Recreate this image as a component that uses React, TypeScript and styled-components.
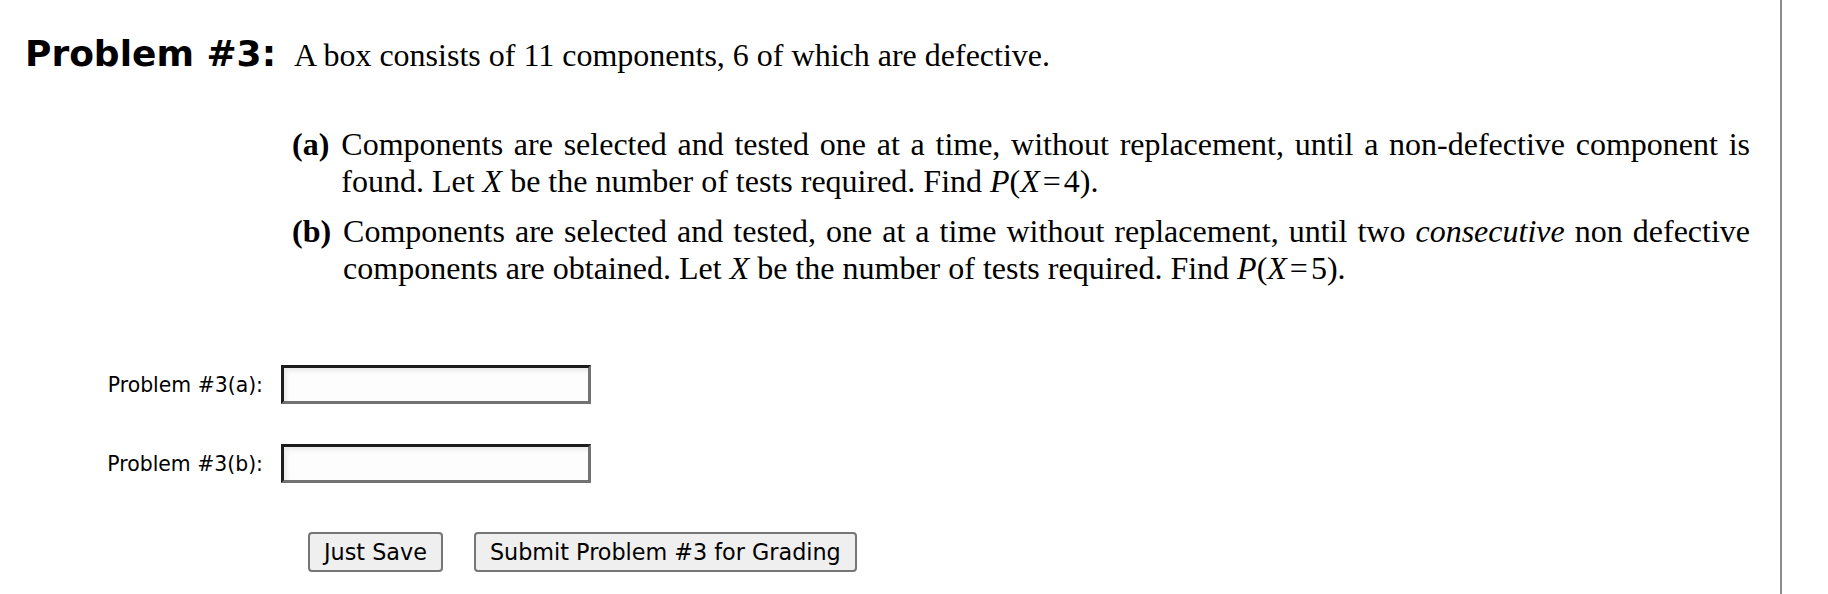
import React from 'react'
import styled, { createGlobalStyle } from 'styled-components'

const Global = createGlobalStyle`
  html, body {
    margin: 0;
    padding: 0;
    background: #ffffff;
  }
  body {
    font-family: "DejaVu Sans", Verdana, sans-serif;
    color: #000;
  }
`

const Page = styled.div`
  box-sizing: border-box;
  width: 1782px;
  min-height: 594px;
  border-right: 2px solid #8c8c8c;
  padding: 33px 30px 0 25px;
`

const Heading = styled.div`
  display: flex;
  align-items: baseline;
  gap: 18px;
`

const Title = styled.span`
  font-family: "DejaVu Sans", Verdana, sans-serif;
  font-weight: bold;
  font-size: 36px;
  line-height: 42px;
  white-space: nowrap;
`

const Serif = styled.span`
  font-family: "Liberation Serif", "Times New Roman", serif;
  font-size: 32px;
  line-height: 37px;
`

const Parts = styled.div`
  display: flex;
  flex-direction: column;
  gap: 13px;
  margin: 51px 0 0 267px;
`

const Part = styled.div`
  display: grid;
  grid-template-columns: auto 1fr;
  column-gap: 12px;
  font-family: "Liberation Serif", "Times New Roman", serif;
  font-size: 32px;
  line-height: 37px;
`

const PartLabel = styled.span`
  font-weight: bold;
`

const PartText = styled.p`
  margin: 0;
  text-align: justify;
`

const Eq = styled.span`
  margin: 0 3px;
`

const Answers = styled.div`
  display: flex;
  flex-direction: column;
  gap: 40px;
  margin-top: 78px;
`

const AnswerRow = styled.label`
  display: grid;
  grid-template-columns: 238px 310px;
  column-gap: 18px;
  align-items: center;
`

const AnswerLabel = styled.span`
  text-align: right;
  font-family: "DejaVu Sans", Verdana, sans-serif;
  font-size: 20.4px;
`

const AnswerInput = styled.input`
  box-sizing: border-box;
  width: 310px;
  height: 39px;
  margin: 0;
  padding: 0 6px;
  border-style: solid;
  border-width: 3px;
  border-color: #1c1c1c #727272 #727272 #1c1c1c;
  background: #fdfdfd;
  box-shadow: inset 3px 3px 4px rgba(0, 0, 0, 0.08);
  font-size: 20px;
  outline: none;
`

const Buttons = styled.div`
  display: flex;
  gap: 31px;
  margin: 49px 0 0 283px;
`

const Button = styled.button`
  box-sizing: border-box;
  height: 40px;
  padding: 0 14px;
  border: 2px solid #767676;
  border-radius: 4px;
  background: #efefef;
  color: #000;
  font-family: "DejaVu Sans", Verdana, sans-serif;
  font-size: 22.3px;
  cursor: pointer;
`

export default function App() {
  return (
    <>
      <Global />
      <Page>
        <Heading>
          <Title>Problem #3:</Title>
          <Serif>A box consists of 11 components, 6 of which are defective.</Serif>
        </Heading>

        <Parts>
          <Part>
            <PartLabel>(a)</PartLabel>
            <PartText>
              Components are selected and tested one at a time, without replacement, until a
              non-defective component is found. Let <i>X</i> be the number of tests required.
              Find <i>P</i>(<i>X</i><Eq>=</Eq>4).
            </PartText>
          </Part>
          <Part>
            <PartLabel>(b)</PartLabel>
            <PartText>
              Components are selected and tested, one at a time without replacement, until two{' '}
              <i>consecutive</i> non defective components are obtained. Let <i>X</i> be the number
              of tests required. Find <i>P</i>(<i>X</i><Eq>=</Eq>5).
            </PartText>
          </Part>
        </Parts>

        <Answers>
          <AnswerRow>
            <AnswerLabel>Problem #3(a):</AnswerLabel>
            <AnswerInput type="text" />
          </AnswerRow>
          <AnswerRow>
            <AnswerLabel>Problem #3(b):</AnswerLabel>
            <AnswerInput type="text" />
          </AnswerRow>
        </Answers>

        <Buttons>
          <Button type="button">Just Save</Button>
          <Button type="button">Submit Problem #3 for Grading</Button>
        </Buttons>
      </Page>
    </>
  )
}
